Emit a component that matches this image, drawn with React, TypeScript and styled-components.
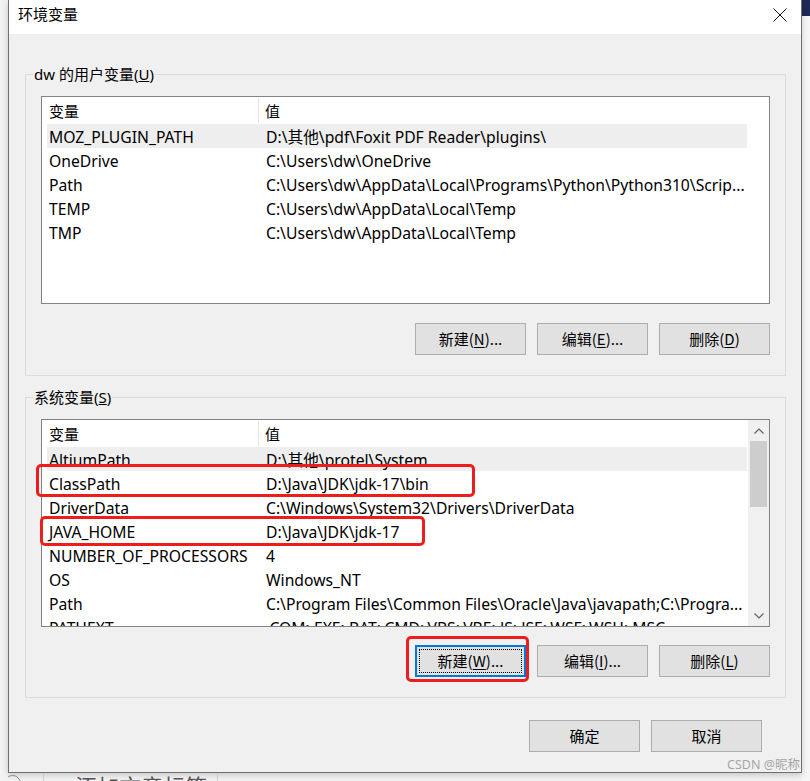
import React from "react";
import styled, { createGlobalStyle } from "styled-components";

const GlobalStyle = createGlobalStyle`
  html, body { margin: 0; padding: 0; }
  body {
    width: 810px;
    height: 781px;
    overflow: hidden;
    background: #f4f4f4;
    font-family: "Noto Sans", "Noto Sans CJK SC", sans-serif;
    color: #000;
  }
`;

const Page = styled.div`
  position: relative;
  width: 810px;
  height: 781px;
  box-sizing: border-box;
  padding-left: 8px;
  display: flex;
  flex-direction: column;
  overflow: hidden;
  background: linear-gradient(to bottom, #1d2a57 0, #1d2a57 16px, #f6f6f6 16px) right top / 8px 100% no-repeat, #f2f2f2;
`;

const Window = styled.div`
  width: 794px;
  height: 773px;
  flex: none;
  box-sizing: border-box;
  border: 1px solid #6f6f6f;
  border-top: none;
  background: #f0f0f0;
  display: flex;
  flex-direction: column;
  box-shadow: 0 2px 6px rgba(0, 0, 0, 0.18);
`;

const TitleBar = styled.div`
  height: 34px;
  flex: none;
  box-sizing: border-box;
  background: #fff;
  display: flex;
  align-items: center;
  padding: 0 14px 8px 9px;
  font-size: 15px;
`;

const Title = styled.span`
  flex: 1;
  font-family: "Noto Sans CJK SC", sans-serif;
`;

const CloseIcon = styled.svg`
  width: 14px;
  height: 14px;
  display: block;
  margin-top: 4px;
`;

const Body = styled.div`
  flex: 1;
  display: flex;
  flex-direction: column;
  padding: 30px 15px 20px 16px;
`;

const Group = styled.fieldset<{ $gapTop?: number }>`
  margin: ${(p) => p.$gapTop ?? 0}px 0 0 0;
  border: 1px solid #dcdcdc;
  padding: 12px 15px 20px 15px;
  min-width: 0;
  display: flex;
  flex-direction: column;
`;

const Legend = styled.legend`
  font-size: 15px;
  line-height: 20px;
  padding: 0 1px;
  margin-left: -8px;
  font-family: "Noto Sans", "Noto Sans CJK SC", sans-serif;
`;

const ListWrap = styled.div`
  position: relative;
`;

const List = styled.div`
  height: 208px;
  box-sizing: border-box;
  border: 1px solid #838383;
  background: #fff;
  display: flex;
  overflow: hidden;
`;

const ListBody = styled.div`
  flex: 1;
  min-width: 0;
  padding-left: 5px;
  display: flex;
  flex-direction: column;
`;

const Header = styled.div`
  height: 27px;
  flex: none;
  display: flex;
  align-items: stretch;
  width: 700px;
  box-sizing: border-box;
  padding: 1px 0 1px;
`;

const HeadCell = styled.div<{ $first?: boolean }>`
  box-sizing: border-box;
  display: flex;
  align-items: center;
  font-size: 15px;
  font-family: "Noto Sans CJK SC", sans-serif;
  ${(p) =>
    p.$first
      ? `width: 212px; padding-left: 2px; border-right: 1px solid #e5e5e5;`
      : `flex: 1; padding-left: 6px;`}
`;

const Row = styled.div<{ $selected?: boolean }>`
  height: 24px;
  flex: none;
  width: 700px;
  box-sizing: border-box;
  padding-top: 2px;
  display: flex;
  align-items: center;
  background: ${(p) => (p.$selected ? "#eeeeee" : "transparent")};
  font-size: 15.7px;
  line-height: 22px;
  white-space: nowrap;
`;

const Cell = styled.div<{ $first?: boolean }>`
  box-sizing: border-box;
  overflow: hidden;
  ${(p) => (p.$first ? `width: 212px; padding-left: 2px;` : `flex: 1; padding-left: 7px;`)}
`;

const ScrollBar = styled.div`
  width: 21px;
  flex: none;
  background: #f0f0f0;
  display: flex;
  flex-direction: column;
  align-items: center;
`;

const ScrollArrow = styled.div`
  height: 21px;
  width: 100%;
  flex: none;
  display: flex;
  align-items: center;
  justify-content: center;
`;

const Thumb = styled.div`
  width: 17px;
  height: 66px;
  flex: none;
  background: #cdcdcd;
`;

const Track = styled.div`
  flex: 1;
`;

const Annotation = styled.div`
  position: absolute;
  box-sizing: border-box;
  border: 3px solid #ee1d1d;
  border-radius: 5px;
  pointer-events: none;
`;

const ButtonRow = styled.div<{ $pad?: number; $top: number }>`
  display: flex;
  justify-content: flex-end;
  gap: 11px;
  margin-top: ${(p) => p.$top}px;
  padding-right: ${(p) => p.$pad ?? 0}px;
`;

const Button = styled.button<{ $focused?: boolean }>`
  position: relative;
  width: 111px;
  height: 32px;
  box-sizing: border-box;
  margin: 0;
  padding: 0 0 2px;
  background: #e1e1e1;
  border: 1px solid ${(p) => (p.$focused ? "#0078d7" : "#adadad")};
  box-shadow: ${(p) => (p.$focused ? "inset 0 0 0 1px #0078d7" : "none")};
  font-family: "Noto Sans CJK SC", sans-serif;
  font-size: 15px;
  color: #000;
  &::after {
    content: "";
    display: ${(p) => (p.$focused ? "block" : "none")};
    position: absolute;
    inset: 3px;
    border: 1px dotted #000;
  }
  u {
    text-underline-offset: 2px;
  }
`;

const Anchor = styled.div`
  position: relative;
  display: flex;
`;

const BottomStrip = styled.div`
  height: 8px;
  flex: none;
  display: flex;
  align-items: flex-start;
  overflow: hidden;
  font-family: "Noto Sans CJK SC", sans-serif;
  color: #555;
`;

const HelpCircle = styled.div`
  width: 15px;
  height: 15px;
  margin: 2px 0 0 -4px;
  border: 1px solid #888;
  border-radius: 50%;
  flex: none;
`;

const StripDivider = styled.div`
  width: 1px;
  height: 8px;
  background: #ccc;
  margin-left: 22px;
`;

const StripText = styled.div`
  font-size: 22px;
  line-height: 22px;
  margin: 1px 0 0 14px;
  padding-right: 10px;
  border-right: 1px solid #ccc;
`;

const Watermark = styled.div`
  position: absolute;
  right: 10px;
  bottom: 8px;
  font-size: 12.5px;
  color: rgba(150, 150, 150, 0.85);
  font-family: "Noto Sans", "Noto Sans CJK SC", sans-serif;
`;

type Var = { name: string; value: string };

const userVars: Var[] = [
  { name: "MOZ_PLUGIN_PATH", value: "D:\\其他\\pdf\\Foxit PDF Reader\\plugins\\" },
  { name: "OneDrive", value: "C:\\Users\\dw\\OneDrive" },
  { name: "Path", value: "C:\\Users\\dw\\AppData\\Local\\Programs\\Python\\Python310\\Scrip..." },
  { name: "TEMP", value: "C:\\Users\\dw\\AppData\\Local\\Temp" },
  { name: "TMP", value: "C:\\Users\\dw\\AppData\\Local\\Temp" },
];

const sysVars: Var[] = [
  { name: "AltiumPath", value: "D:\\其他\\protel\\System" },
  { name: "ClassPath", value: "D:\\Java\\JDK\\jdk-17\\bin" },
  { name: "DriverData", value: "C:\\Windows\\System32\\Drivers\\DriverData" },
  { name: "JAVA_HOME", value: "D:\\Java\\JDK\\jdk-17" },
  { name: "NUMBER_OF_PROCESSORS", value: "4" },
  { name: "OS", value: "Windows_NT" },
  { name: "Path", value: "C:\\Program Files\\Common Files\\Oracle\\Java\\javapath;C:\\Progra..." },
  { name: "PATHEXT", value: ".COM;.EXE;.BAT;.CMD;.VBS;.VBE;.JS;.JSE;.WSF;.WSH;.MSC" },
];

const Chevron = ({ up }: { up?: boolean }) => (
  <svg width="10" height="6" viewBox="0 0 10 6">
    <path
      d={up ? "M0.5 5.5 L5 1 L9.5 5.5" : "M0.5 0.5 L5 5 L9.5 0.5"}
      fill="none"
      stroke="#606060"
      strokeWidth="1.2"
    />
  </svg>
);

const VarList = ({ vars, scroll }: { vars: Var[]; scroll?: boolean }) => (
  <List>
    <ListBody>
      <Header>
        <HeadCell $first>变量</HeadCell>
        <HeadCell>值</HeadCell>
      </Header>
      {vars.map((v, i) => (
        <Row key={v.name + i} $selected={i === 0}>
          <Cell $first>{v.name}</Cell>
          <Cell>{v.value}</Cell>
        </Row>
      ))}
    </ListBody>
    {scroll && (
      <ScrollBar>
        <ScrollArrow>
          <Chevron up />
        </ScrollArrow>
        <Thumb />
        <Track />
        <ScrollArrow>
          <Chevron />
        </ScrollArrow>
      </ScrollBar>
    )}
  </List>
);

export default function App() {
  return (
    <Page>
      <GlobalStyle />
      <Window>
        <TitleBar>
          <Title>环境变量</Title>
          <CloseIcon viewBox="0 0 14 14">
            <path d="M0.5 0.5 L13.5 13.5 M13.5 0.5 L0.5 13.5" stroke="#111" strokeWidth="1" />
          </CloseIcon>
        </TitleBar>
        <Body>
          <Group>
            <Legend>
              dw 的用户变量(<u>U</u>)
            </Legend>
            <ListWrap>
              <VarList vars={userVars} />
            </ListWrap>
            <ButtonRow $top={19}>
              <Button>
                新建(<u>N</u>)...
              </Button>
              <Button>
                编辑(<u>E</u>)...
              </Button>
              <Button>
                删除(<u>D</u>)
              </Button>
            </ButtonRow>
          </Group>
          <Group $gapTop={11}>
            <Legend>
              系统变量(<u>S</u>)
            </Legend>
            <ListWrap>
              <VarList vars={sysVars} scroll />
              <Annotation style={{ left: -5, top: 45, width: 439, height: 33 }} />
              <Annotation style={{ left: -1, top: 97, width: 385, height: 30 }} />
            </ListWrap>
            <ButtonRow $top={18}>
              <Anchor>
                <Button $focused>
                  新建(<u>W</u>)...
                </Button>
                <Annotation style={{ left: -9, top: -9, right: -3, bottom: -5 }} />
              </Anchor>
              <Button>
                编辑(<u>I</u>)...
              </Button>
              <Button>
                删除(<u>L</u>)
              </Button>
            </ButtonRow>
          </Group>
          <ButtonRow $top={22} $pad={24}>
            <Button>确定</Button>
            <Button>取消</Button>
          </ButtonRow>
        </Body>
      </Window>
      <BottomStrip>
        <HelpCircle />
        <StripDivider />
        <StripText>+ 添加文章标签</StripText>
      </BottomStrip>
      <Watermark>CSDN @昵称</Watermark>
    </Page>
  );
}
